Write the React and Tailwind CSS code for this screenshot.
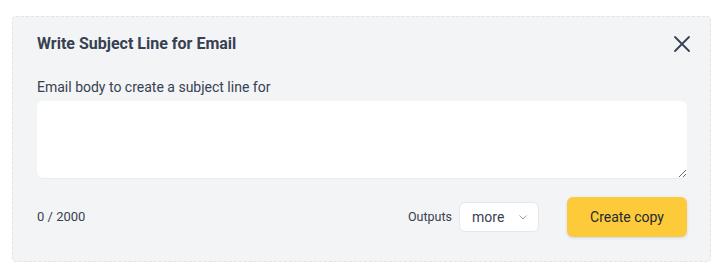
import React, { useState } from 'react';

export default function App() {
  const [body, setBody] = useState('');

  return (
    <main className="w-[725px] h-[267px] bg-white pt-4 pl-3 font-['Roboto',sans-serif] text-[#374151]">
      <div className="w-[699px] h-[246px] bg-[#f3f4f6] border border-dashed border-[#e2e4e8] rounded px-6 pt-4">
        <div className="flex items-center justify-between h-[22px]">
          <h2 className="text-[16px] font-bold text-[#374151] leading-none">Write Subject Line for Email</h2>
          <button className="mr-[-8px] text-[#374151]">
            <svg width="24" height="24" viewBox="0 0 24 24" fill="none" stroke="currentColor" strokeWidth="1.8" strokeLinecap="round">
              <path d="M5 5l14 14M19 5L5 19" />
            </svg>
          </button>
        </div>

        <label className="block mt-[22px] text-[14px] leading-5">Email body to create a subject line for</label>
        <textarea
          value={body}
          onChange={(e) => setBody(e.target.value)}
          className="block mt-[4px] w-[650px] h-[77px] bg-white rounded-md border-0 outline-none shadow-[0_1px_1px_rgba(0,0,0,0.04)] px-3 py-2 text-sm"
        />

        <div className="flex items-center justify-between mt-[19px] w-[650px]">
          <span className="text-[13px] text-[#374151]">{body.length} / 2000</span>
          <div className="flex items-center">
            <span className="text-[12.5px] text-[#374151] mr-[7px]">Outputs</span>
            <div className="w-[80px] h-[30px] bg-white rounded-md border border-[#e5e7eb] flex items-center justify-between pl-[12px] pr-[10px]">
              <span className="text-[14px] text-[#374151]">more</span>
              <svg width="10" height="10" viewBox="0 0 10 10" fill="none" stroke="#9ca3af" strokeWidth="1">
                <path d="M1.5 3.5L5 7l3.5-3.5" />
              </svg>
            </div>
            <button className="ml-[28px] w-[120px] h-[40px] bg-[#fdcb3a] rounded-md shadow-[0_1px_3px_rgba(59,130,246,0.25)] text-[14px] text-[#1f2937]">
              Create copy
            </button>
          </div>
        </div>
      </div>
    </main>
  );
}
